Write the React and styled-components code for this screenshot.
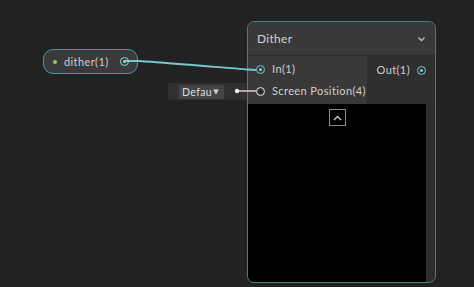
import styled, { createGlobalStyle } from "styled-components"

const Global = createGlobalStyle`
  html, body {
    margin: 0;
    padding: 0;
    background: #222222;
    overflow: hidden;
  }
  * { box-sizing: border-box; }
`

const Canvas = styled.div`
  position: relative;
  width: 474px;
  height: 287px;
  background: #222222;
  font-family: Lato, "DejaVu Sans", sans-serif;
  color: #c8c8c8;
`

const Wires = styled.svg`
  position: absolute;
  left: 0;
  top: 0;
  z-index: 2;
  pointer-events: none;
`

const PropertyPill = styled.div`
  position: absolute;
  left: 43px;
  top: 49px;
  width: 95px;
  height: 25px;
  border: 1.5px solid #4a95a6;
  border-radius: 10px;
  background: #3a3a3a;
  display: flex;
  align-items: center;
  padding: 0 8px 0 9px;
  gap: 7px;
  font-size: 11px;
  letter-spacing: 0.4px;
  color: #cfcfcf;
`

const Dot = styled.span`
  width: ${p => p.size || 4}px;
  height: ${p => p.size || 4}px;
  border-radius: 50%;
  background: ${p => p.color};
  flex-shrink: 0;
`

const Port = styled.span`
  position: relative;
  z-index: 3;
  width: 9px;
  height: 9px;
  border-radius: 50%;
  border: 1.5px solid ${p => p.color};
  display: flex;
  align-items: center;
  justify-content: center;
  flex-shrink: 0;
  &::after {
    content: "";
    width: 3px;
    height: 3px;
    border-radius: 50%;
    background: ${p => p.fill};
  }
`

const PillLabel = styled.span`
  flex: 1;
`

const DefaultField = styled.div`
  position: absolute;
  left: 168px;
  top: 83px;
  width: 80px;
  height: 17px;
  background: #303030;
  display: flex;
  align-items: center;
  padding-left: 11px;
`

const DropBox = styled.div`
  height: 14px;
  width: 45px;
  background: #444444;
  border-radius: 2px;
  font-size: 10.5px;
  letter-spacing: 0.4px;
  color: #dcdcdc;
  display: flex;
  align-items: center;
  padding-left: 3px;
  gap: 1px;
`

const Caret = styled.span`
  font-size: 7px;
  color: #d0d0d0;
`

const Node = styled.div`
  position: absolute;
  left: 247px;
  top: 21px;
  width: 189px;
  height: 262px;
  border: 1.5px solid #3f7f8d;
  border-radius: 7px;
  background: #2d2d2d;
  overflow: hidden;
  display: flex;
  flex-direction: column;
`

const Header = styled.div`
  height: 34px;
  background: #393939;
  border-bottom: 1px solid #2a2a2a;
  display: flex;
  align-items: center;
  justify-content: space-between;
  padding: 0 9px 0 9px;
  font-size: 12px;
  letter-spacing: 0.3px;
  color: #d2d2d2;
`

const Body = styled.div`
  display: flex;
  height: 48px;
`

const Inputs = styled.div`
  width: 119px;
  background: #393939;
  display: flex;
  flex-direction: column;
  justify-content: center;
  gap: 12px;
  padding-left: 8px;
`

const Outputs = styled.div`
  flex: 1;
  background: #2e2e2e;
  display: flex;
  align-items: flex-start;
  justify-content: flex-end;
  padding: 9px 9px 0 0;
`

const Slot = styled.div`
  display: flex;
  align-items: center;
  gap: 7px;
  font-size: 11px;
  letter-spacing: 0.4px;
  color: #cfcfcf;
  white-space: nowrap;
  line-height: 10px;
`

const PreviewRow = styled.div`
  flex: 1;
  display: flex;
`

const Preview = styled.div`
  width: 178px;
  background: #000000;
  display: flex;
  justify-content: center;
  padding-top: 5px;
  border-bottom-left-radius: 5px;
`

const CollapseButton = styled.div`
  width: 17px;
  height: 17px;
  border: 1px solid #8a8a8a;
  display: flex;
  align-items: center;
  justify-content: center;
`

const Chevron = ({ up, color = "#bdbdbd" }) => (
  <svg width="9" height="6" viewBox="0 0 9 6">
    <path
      d={up ? "M1 5 L4.5 1.5 L8 5" : "M1.5 1.5 L4.5 4.5 L7.5 1.5"}
      fill="none"
      stroke={color}
      strokeWidth="1.4"
    />
  </svg>
)

const App = () => (
  <Canvas>
    <Global />

    <PropertyPill>
      <Dot color="#8ed44d" />
      <PillLabel>dither(1)</PillLabel>
      <Port color="#8fd8e0" fill="#8fd8e0" />
    </PropertyPill>

    <DefaultField>
      <DropBox>
        Defau<Caret>▼</Caret>
      </DropBox>
    </DefaultField>

    <Node>
      <Header>
        <span>Dither</span>
        <Chevron />
      </Header>
      <Body>
        <Inputs>
          <Slot>
            <Port color="#7ec8d0" fill="#7ec8d0" />
            In(1)
          </Slot>
          <Slot>
            <Port color="#e8e0e8" fill="#1a1a1a" />
            Screen Position(4)
          </Slot>
        </Inputs>
        <Outputs>
          <Slot>
            Out(1)
            <Port color="#7ec8d0" fill="#7ec8d0" />
          </Slot>
        </Outputs>
      </Body>
      <PreviewRow>
        <Preview>
          <CollapseButton>
            <Chevron up color="#c8c8c8" />
          </CollapseButton>
        </Preview>
      </PreviewRow>
    </Node>

    <Wires width="474" height="287">
      <path
        d="M124 61 L138 61 C146 61 240 69 248 69.5 L256 70"
        fill="none"
        stroke="#79c6d0"
        strokeWidth="1.8"
      />
      <path d="M237 91 L256 91" stroke="#d9bcd0" strokeWidth="1.6" />
      <circle cx="237" cy="91" r="2.2" fill="#f0f0f0" />
    </Wires>
  </Canvas>
)

export default App
